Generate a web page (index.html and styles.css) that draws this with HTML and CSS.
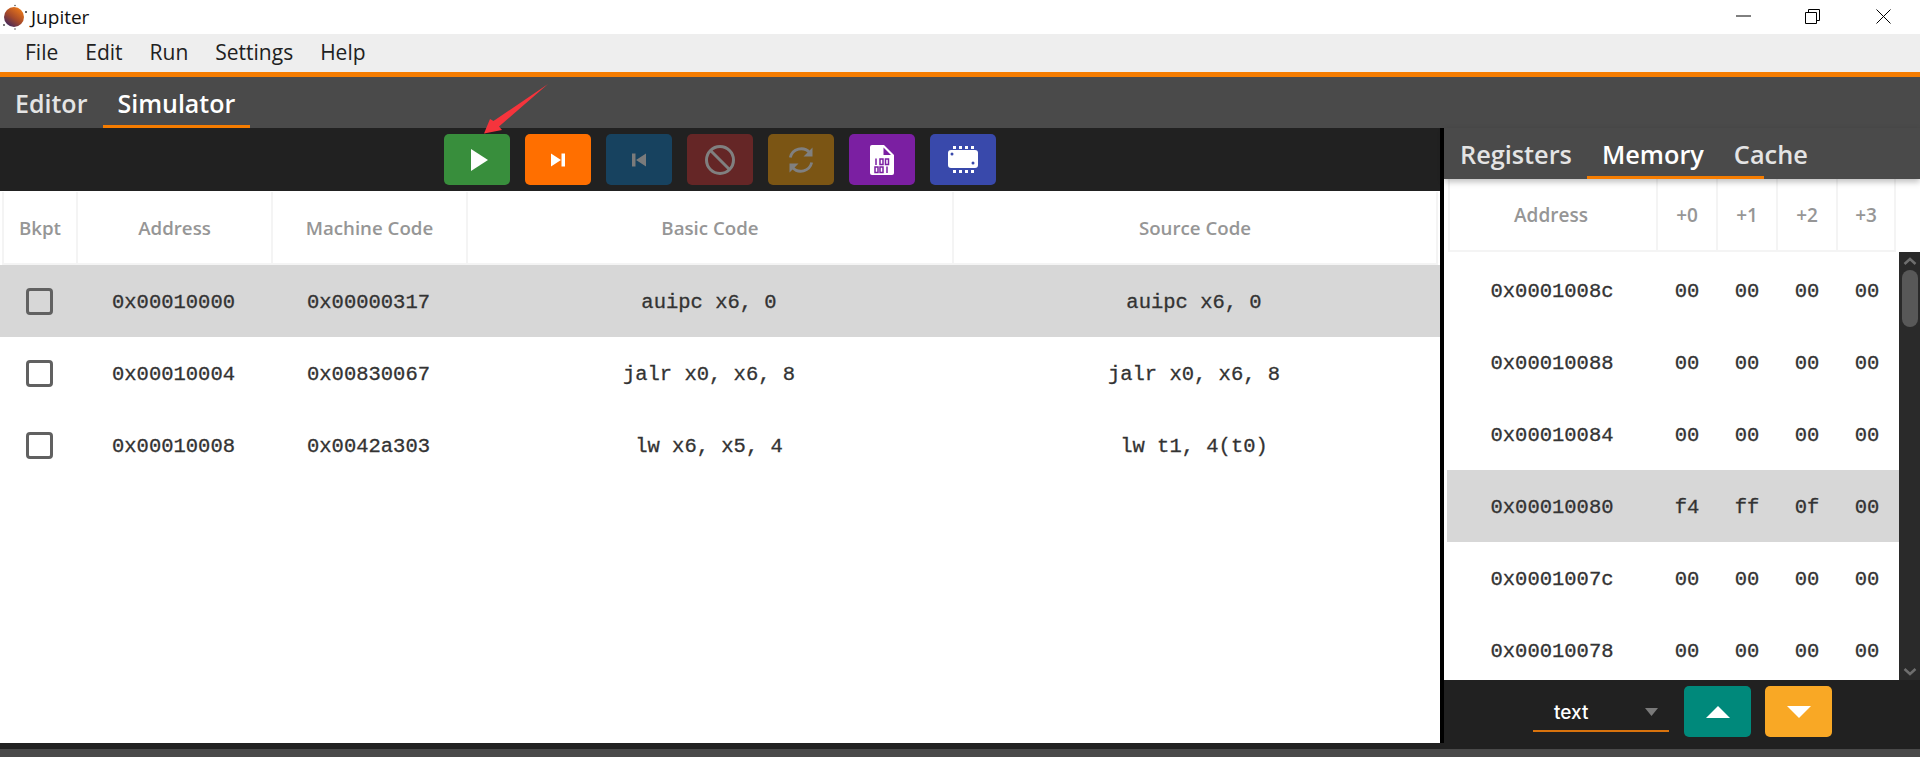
FILE: index.html
```html
<!DOCTYPE html>
<html lang="en">
<head>
<meta charset="utf-8">
<title>Jupiter</title>
<link rel="stylesheet" href="styles.css">
</head>
<body>
<header class="titlebar">
  <svg class="logo" width="26" height="26" viewBox="0 0 26 26">
    <defs><linearGradient id="jup" x1="0.8" y1="0.1" x2="0.2" y2="0.9"><stop offset="0" stop-color="#e8761a"/><stop offset="0.55" stop-color="#a5492a"/><stop offset="1" stop-color="#4a2a5a"/></linearGradient></defs>
    <circle cx="13" cy="13" r="10" fill="url(#jup)"/>
    <circle cx="25" cy="8" r="1" fill="#333"/><circle cx="3" cy="21" r="1" fill="#555"/><circle cx="14" cy="1.5" r="0.8" fill="#555"/><circle cx="14" cy="25" r="0.8" fill="#555"/>
  </svg>
  <span class="app-name">Jupiter</span>
  <div class="winctl">
    <svg width="15" height="15" viewBox="0 0 15 15"><path d="M0 7h15" stroke="#000" fill="none"/></svg>
    <svg width="15" height="15" viewBox="0 0 15 15"><path d="M.5 3.5h11v11H.5zM3.5 3.5V.5h11v11h-3" stroke="#000" fill="none"/></svg>
    <svg class="close" width="15" height="15" viewBox="0 0 15 15"><path d="M.5.5l14 14M14.5.5l-14 14" stroke="#000" fill="none"/></svg>
  </div>
</header>
<nav class="menubar">
  <span class="menu-item">File</span><span class="menu-item">Edit</span><span class="menu-item">Run</span><span class="menu-item">Settings</span><span class="menu-item">Help</span>
</nav>
<div class="tabbar">
  <span class="tab">Editor</span><span class="tab active">Simulator</span>
</div>
<main class="workspace">
  <section class="left-pane">
    <div class="toolbar">
      <button class="tool green"><svg width="22" height="24" viewBox="0 0 22 24"><path d="M5 1L22 12 5 23z" fill="#fff"/></svg></button>
      <button class="tool orange"><svg width="16" height="16" viewBox="0 0 16 16"><path d="M1 1.500L11 8 1 14.500zM11.500 1.500H15V14.500H11.500z" fill="#fff"/></svg></button>
      <button class="tool blue"><svg width="16" height="16" viewBox="0 0 16 16"><path d="M15 1.500L5 8l10 6.500zM4.500 1.500H1V14.500H4.500z" fill="#7b7b7b"/></svg></button>
      <button class="tool red"><svg width="32" height="32" viewBox="0 0 32 32"><circle cx="16" cy="16" r="13.500" fill="none" stroke="#808080" stroke-width="3"/><path d="M6.500 6.500l19 19" stroke="#808080" stroke-width="3"/></svg></button>
      <button class="tool amber"><svg width="30" height="30" viewBox="0 0 30 30"><path d="M4.300 12.500A11.200 11.200 0 0 1 23.500 7.500M25.700 17.500A11.200 11.200 0 0 1 6.500 22.500" fill="none" stroke="#808080" stroke-width="2.800"/><path d="M26.500 2.500v9h-9zM3.500 27.500v-9h9z" fill="#808080"/></svg></button>
      <button class="tool purple"><svg width="24" height="30" viewBox="0 0 24 30"><path d="M2 0h12l10 10v18a2 2 0 0 1-2 2H2a2 2 0 0 1-2-2V2a2 2 0 0 1 2-2z" fill="#fff"/><path d="M13.500 2.500V10H21z" fill="#7b1fa2"/><g fill="none" stroke="#7b1fa2" stroke-width="1.500"><path d="M6 13.500v6.500M10 14h3v5.500h-3zM15.500 14h3v5.500h-3zM5 22h3v5.500H5zM10 22h3v5.500h-3zM17 21.500v6.500"/></g></svg></button>
      <button class="tool indigo"><svg width="30" height="27" viewBox="0 0 30 27"><rect y="4" width="30" height="18" rx="3" fill="#fff"/><g fill="#fff"><rect x="5" width="3" height="3"/><rect x="11" width="3" height="3"/><rect x="17" width="3" height="3"/><rect x="23" width="3" height="3"/><rect x="5" y="24" width="3" height="3"/><rect x="11" y="24" width="3" height="3"/><rect x="17" y="24" width="3" height="3"/><rect x="23" y="24" width="3" height="3"/></g><circle cx="4" cy="8" r="1.500" fill="#3949ab"/><circle cx="25" cy="17" r="1.500" fill="#3949ab"/></svg></button>
    </div>
    <div class="program">
      <div class="prog-row prog-head">
        <span class="hcell">Bkpt</span><span class="hcell">Address</span><span class="hcell">Machine Code</span><span class="hcell">Basic Code</span><span class="hcell">Source Code</span>
      </div>
      <div class="prog-row line current">
        <span class="cell"><i class="check"></i></span><span class="cell">0x00010000</span><span class="cell">0x00000317</span><span class="cell">auipc x6, 0</span><span class="cell">auipc x6, 0</span>
      </div>
      <div class="prog-row line">
        <span class="cell"><i class="check"></i></span><span class="cell">0x00010004</span><span class="cell">0x00830067</span><span class="cell">jalr x0, x6, 8</span><span class="cell">jalr x0, x6, 8</span>
      </div>
      <div class="prog-row line">
        <span class="cell"><i class="check"></i></span><span class="cell">0x00010008</span><span class="cell">0x0042a303</span><span class="cell">lw x6, x5, 4</span><span class="cell">lw t1, 4(t0)</span>
      </div>
    </div>
  </section>
  <div class="divider"></div>
  <aside class="right-pane">
    <div class="side-tabs">
      <span class="side-tab">Registers</span><span class="side-tab active">Memory</span><span class="side-tab">Cache</span>
    </div>
    <div class="mem-head">
      <span class="hcell addr">Address</span><span class="hcell">+0</span><span class="hcell">+1</span><span class="hcell">+2</span><span class="hcell">+3</span>
    </div>
    <div class="mem-body">
      <div class="mem-rows">
        <div class="mem-row"><span>0x0001008c</span><span>00</span><span>00</span><span>00</span><span>00</span></div>
        <div class="mem-row"><span>0x00010088</span><span>00</span><span>00</span><span>00</span><span>00</span></div>
        <div class="mem-row"><span>0x00010084</span><span>00</span><span>00</span><span>00</span><span>00</span></div>
        <div class="mem-row current"><span>0x00010080</span><span>f4</span><span>ff</span><span>0f</span><span>00</span></div>
        <div class="mem-row"><span>0x0001007c</span><span>00</span><span>00</span><span>00</span><span>00</span></div>
        <div class="mem-row"><span>0x00010078</span><span>00</span><span>00</span><span>00</span><span>00</span></div>
      </div>
      <div class="scrollbar">
        <svg width="14" height="8" viewBox="0 0 14 8"><path d="M1.500 7L7 2l5.500 5" fill="none" stroke="#6e6e6e" stroke-width="2.500"/></svg>
        <div class="thumb"></div>
        <svg class="down" width="14" height="8" viewBox="0 0 14 8"><path d="M1.500 1L7 6l5.500-5" fill="none" stroke="#6e6e6e" stroke-width="2.500"/></svg>
      </div>
    </div>
    <div class="mem-controls">
      <div class="select"><span>text</span><svg width="13" height="8" viewBox="0 0 13 8"><path d="M0 0h13L6.500 8z" fill="#7a7a7a"/></svg></div>
      <button class="nav teal"><svg width="24" height="12" viewBox="0 0 24 12"><path d="M12 0l12 12H0z" fill="#fff"/></svg></button>
      <button class="nav gold"><svg width="24" height="12" viewBox="0 0 24 12"><path d="M12 12L0 0h24z" fill="#fff"/></svg></button>
    </div>
  </aside>
</main>
<div class="footer-strip"></div>
<svg class="annotation" width="70" height="54" viewBox="0 0 70 54"><path d="M69 0L14.500 37 11 35 5 49.500 23 46 20 42.500z" fill="#f5343c"/></svg>
</body>
</html>
```
FILE: styles.css
```css
* { box-sizing: border-box; }
html, body { margin: 0; height: 757px; overflow: hidden; }
body { display: flex; flex-direction: column; background: #fff; font-family: "Open Sans", "Noto Sans", sans-serif; position: relative; }
button { border: 0; padding: 0; display: flex; align-items: center; justify-content: center; border-radius: 5px; }

.titlebar { height: 34px; flex: none; display: flex; align-items: center; padding-left: 1px; background: #fff; }
.logo { flex: none; }
.app-name { margin-left: 4px; font-size: 19px; color: #111; }
.winctl { margin-left: auto; display: flex; gap: 54px; padding-right: 29px; margin-top: -1px; }
.close { margin-left: 2px; }

.menubar { height: 43px; flex: none; display: flex; gap: 27px; padding: 0 0 2px 25px; align-items: center; background: #eeeeee; border-bottom: 5px solid #f57c00; }
.menu-item { font-size: 21px; font-weight: 500; color: #212121; }

.tabbar { height: 51px; flex: none; display: flex; background: #4a4a4a; color: #fff; }
.tab { padding: 0 15px; font-size: 25px; font-weight: 600; line-height: 52px; color: #e4e4e4; }
.tab.active { color: #fff; margin-left: 1px; padding-left: 14px; border-bottom: 3px solid #f57c00; }

.workspace { flex: 1; display: flex; min-height: 0; }
.left-pane { width: 1440px; flex: none; display: flex; flex-direction: column; }
.divider { width: 4px; flex: none; background: #000; }
.right-pane { flex: 1; min-width: 0; display: flex; flex-direction: column; background: #212121; }

.toolbar { height: 63px; flex: none; display: flex; justify-content: center; align-items: flex-start; padding-top: 6px; gap: 15px; background: #212121; }
.tool { width: 66px; height: 51px; }
.green { background: #388e3c; }
.orange { background: #ff6f00; }
.blue { background: #17425f; }
.red { background: #652626; }
.amber { background: #7b5514; }
.purple { background: #7b1fa2; }
.indigo { background: #3949ab; }

.program { flex: 1; background: #fff; padding-top: 1px; }
.prog-row { display: grid; grid-template-columns: 2px 74px 195px 195px 486px 484px; }
.prog-row > :first-child { grid-column: 2; }
.prog-head { height: 73px; grid-template-columns: 2px 76px 195px 195px 486px 484px; }
.hcell { display: flex; align-items: center; justify-content: center; font-size: 18.700px; font-weight: 600; color: #969696; border-right: 2px solid #f4f4f4; border-bottom: 2px solid #f4f4f4; }
.prog-head .hcell:first-child { border-left: 2px solid #f4f4f4; }
.line { height: 72px; }
.cell { display: flex; align-items: center; justify-content: center; padding-top: 3px; font: 20.500px "Liberation Mono", "DejaVu Sans Mono", monospace; -webkit-text-stroke: .3px #333; color: #333; }
.current { background: #d7d7d7; }
.check { display: block; width: 27px; height: 27px; margin-top: -3px; border: 3px solid #616161; border-radius: 4px; }

.side-tabs { height: 51px; flex: none; display: flex; background: #4a4a4a; box-shadow: 0 3px 6px rgba(0,0,0,.25); position: relative; z-index: 1; padding-left: 1px; }
.side-tab { padding: 0 15px; font-size: 25.300px; font-weight: 600; line-height: 52px; color: #e4e4e4; position: relative; }
.side-tab.active { color: #fff; }
.side-tab.active::after { content: ""; position: absolute; left: 0; right: -45px; bottom: 0; height: 3px; background: #f57c00; }

.mem-head { height: 73px; flex: none; display: grid; grid-template-columns: 210px 60px 60px 60px 58px 24px; background: #fff; padding-left: 4px; }
.mem-head .hcell { font-size: 19px; padding-top: 1px; }
.mem-head .addr { border-left: 2px solid #f4f4f4; padding-right: 4px; }

.mem-body { flex: 1; min-height: 0; display: flex; background: #fff; overflow: hidden; }
.mem-rows { flex: 1; padding: 2px 0 0 3px; overflow: hidden; }
.mem-row { height: 72px; display: grid; grid-template-columns: 210px 60px 60px 60px 60px; align-items: center; justify-items: center; padding-top: 3px; font: 20.500px "Liberation Mono", "DejaVu Sans Mono", monospace; -webkit-text-stroke: .3px #333; color: #333; }
.scrollbar { width: 21px; flex: none; background: #2a2a2a; display: flex; flex-direction: column; align-items: center; padding: 5px 0 4px; }
.thumb { width: 16px; height: 57px; margin-top: 5px; border-radius: 8px; background: #585858; }
.down { margin-top: auto; }

.mem-controls { height: 63px; flex: none; display: flex; align-items: flex-start; padding: 6px 0 0 89px; background: #212121; }
.select { width: 136px; height: 46px; margin-right: 15px; padding: 8px 11px 0 21px; display: flex; align-items: center; justify-content: space-between; border-bottom: 2px solid #d9730d; color: #fff; font: 500 19px "Inter", "Roboto", sans-serif; }
.nav { width: 67px; height: 51px; }
.teal { background: #00897b; }
.gold { background: #f9a825; margin-left: 14px; }

.footer-strip { height: 14px; flex: none; background: #4a4a4a; border-top: 6px solid #212121; }
.annotation { position: absolute; left: 479px; top: 84px; }
```
